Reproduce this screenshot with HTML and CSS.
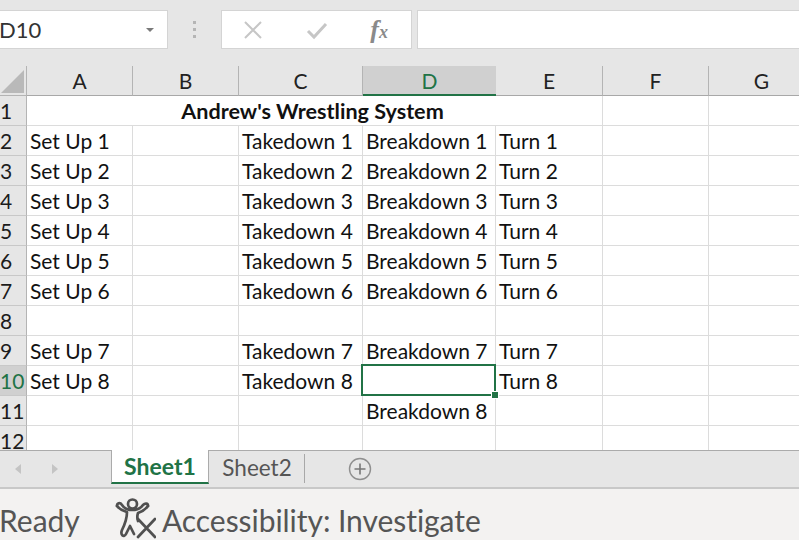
FILE: index.html
```html
<!DOCTYPE html>
<html lang="en">
<head>
  <meta charset="UTF-8" />
  <title>Andrew's Wrestling System</title>
  <link rel="stylesheet" href="styles.css">
</head>
<body>
  <div class="app">
    <div class="formula-bar">
      <div class="name-box">
        <span>D10</span>
        <svg class="name-arrow" width="8" height="4" viewBox="0 0 8 4"><path d="M0 0h8L4 4z" fill="#7a7a7a"/></svg>
      </div>
      <div class="grip"><i></i><i></i><i></i></div>
      <div class="fx-buttons">
        <svg width="20" height="20" viewBox="0 0 20 20"><path d="M2 2l16 16M18 2L2 18" stroke="#c6c6c6" stroke-width="2" fill="none"/></svg>
        <svg width="22" height="20" viewBox="0 0 22 20"><path d="M2 11l6 6L20 4" stroke="#c6c6c6" stroke-width="3" fill="none"/></svg>
        <span class="fx">f<span class="fx-x">x</span></span>
      </div>
      <div class="formula-input"></div>
    </div>

    <div class="sheet">
      <div class="corner"><svg width="23" height="23" viewBox="0 0 23 23"><path d="M23 0v23H0z" fill="#b9b9b9"/></svg></div>
      <div class="col-head">A</div>
      <div class="col-head">B</div>
      <div class="col-head">C</div>
      <div class="col-head selected">D</div>
      <div class="col-head">E</div>
      <div class="col-head">F</div>
      <div class="col-head">G</div>

      <div class="row-head">1</div>
      <div class="cell title">Andrew's Wrestling System</div>
      <div class="cell"></div><div class="cell"></div>

      <div class="row-head">2</div>
      <div class="cell">Set Up 1</div><div class="cell"></div><div class="cell">Takedown 1</div><div class="cell">Breakdown 1</div><div class="cell">Turn 1</div><div class="cell"></div><div class="cell"></div>

      <div class="row-head">3</div>
      <div class="cell">Set Up 2</div><div class="cell"></div><div class="cell">Takedown 2</div><div class="cell">Breakdown 2</div><div class="cell">Turn 2</div><div class="cell"></div><div class="cell"></div>

      <div class="row-head">4</div>
      <div class="cell">Set Up 3</div><div class="cell"></div><div class="cell">Takedown 3</div><div class="cell">Breakdown 3</div><div class="cell">Turn 3</div><div class="cell"></div><div class="cell"></div>

      <div class="row-head">5</div>
      <div class="cell">Set Up 4</div><div class="cell"></div><div class="cell">Takedown 4</div><div class="cell">Breakdown 4</div><div class="cell">Turn 4</div><div class="cell"></div><div class="cell"></div>

      <div class="row-head">6</div>
      <div class="cell">Set Up 5</div><div class="cell"></div><div class="cell">Takedown 5</div><div class="cell">Breakdown 5</div><div class="cell">Turn 5</div><div class="cell"></div><div class="cell"></div>

      <div class="row-head">7</div>
      <div class="cell">Set Up 6</div><div class="cell"></div><div class="cell">Takedown 6</div><div class="cell">Breakdown 6</div><div class="cell">Turn 6</div><div class="cell"></div><div class="cell"></div>

      <div class="row-head">8</div>
      <div class="cell"></div><div class="cell"></div><div class="cell"></div><div class="cell"></div><div class="cell"></div><div class="cell"></div><div class="cell"></div>

      <div class="row-head">9</div>
      <div class="cell">Set Up 7</div><div class="cell"></div><div class="cell">Takedown 7</div><div class="cell">Breakdown 7</div><div class="cell">Turn 7</div><div class="cell"></div><div class="cell"></div>

      <div class="row-head selected">10</div>
      <div class="cell">Set Up 8</div><div class="cell"></div><div class="cell">Takedown 8</div><div class="cell active"></div><div class="cell">Turn 8</div><div class="cell"></div><div class="cell"></div>

      <div class="row-head">11</div>
      <div class="cell"></div><div class="cell"></div><div class="cell"></div><div class="cell">Breakdown 8</div><div class="cell"></div><div class="cell"></div><div class="cell"></div>

      <div class="row-head">12</div>
      <div class="cell"></div><div class="cell"></div><div class="cell"></div><div class="cell"></div><div class="cell"></div><div class="cell"></div><div class="cell"></div>
    </div>

    <div class="tab-bar">
      <div class="tab-nav">
        <svg width="6" height="10" viewBox="0 0 6 10"><path d="M6 0v10L0 5z" fill="#c4c4c4"/></svg>
        <svg width="6" height="10" viewBox="0 0 6 10"><path d="M0 0v10l6-5z" fill="#c4c4c4"/></svg>
      </div>
      <div class="tab current">Sheet1</div>
      <div class="tab">Sheet2</div>
      <div class="tab-sep"></div>
      <svg class="add-sheet" width="24" height="24" viewBox="0 0 24 24"><circle cx="12" cy="12" r="10.5" fill="none" stroke="#8f8f8f" stroke-width="1.4"/><path d="M12 6.5v11M6.5 12h11" stroke="#777" stroke-width="1.6"/></svg>
    </div>

    <div class="status-bar">
      <span class="status-ready">Ready</span>
      <svg class="access-icon" width="42" height="42" viewBox="0 0 42 42" fill="none" stroke="#505050" stroke-width="2.7" stroke-linecap="round" stroke-linejoin="round">
        <circle cx="18.500" cy="7" r="4.500"/>
        <path d="M3 9C3 6 6 5 8 8c2 3 5 5 10 5s9-2 11-5c2-2 5-2 5 1"/>
        <path d="M3 9c3 4 7 5 10 6 0 7-2 12-5 18-2 5 2 8 4 4l4-8 4 8"/>
        <path d="M34 9c-3 4-7 6-10 7-1 3-1 5 0 8"/>
        <path d="M24 22l17 18M41 22L24 40"/>
      </svg>
      <span class="status-access">Accessibility: Investigate</span>
    </div>
  </div>
</body>
</html>
```

FILE: styles.css
```css
html, body {
  margin: 0;
  height: 100%;
  overflow: hidden;
}

body {
  font-family: Lato, "Open Sans", sans-serif;
  color: #1c1c1c;
  background: #e6e6e6;
}

.app {
  display: flex;
  flex-direction: column;
  height: 540px;
  width: 799px;
  overflow: hidden;
}

/* formula bar */
.formula-bar {
  display: flex;
  align-items: stretch;
  height: 39px;
  padding: 10px 0 17px;
  flex: none;
}

.name-box {
  width: 168px;
  box-sizing: border-box;
  display: flex;
  align-items: center;
  justify-content: space-between;
  padding-right: 13px;
  background: #fff;
  border: 1px solid #d4d4d4;
  border-left: none;
  font-size: 22px;
  color: #333;
}

.name-box span {
  margin-left: -1px;
}

.grip {
  width: 53px;
  display: flex;
  flex-direction: column;
  align-items: center;
  justify-content: center;
  gap: 4px;
}

.grip i {
  width: 3px;
  height: 3px;
  background: #b5b5b5;
}

.fx-buttons {
  width: 191px;
  box-sizing: border-box;
  display: flex;
  align-items: center;
  justify-content: space-between;
  padding: 0 23px 0 21px;
  background: #fff;
  border: 1px solid #d4d4d4;
}

.fx {
  font-family: "Liberation Serif", serif;
  font-style: italic;
  font-weight: bold;
  font-size: 26px;
  color: #8a8a8a;
}

.fx-x {
  font-size: 18px;
}

.formula-input {
  flex: 1;
  margin-left: 5px;
  background: #fff;
  border: 1px solid #d4d4d4;
  border-right: none;
}

/* grid */
.sheet {
  flex: none;
  height: 384px;
  overflow: hidden;
  display: grid;
  grid-template-columns: 27px 106px 106px 124px 133px 107px 106px 106px;
  grid-template-rows: repeat(13, 30px);
  background: #fff;
  font-size: 21px;
}

.corner {
  background: #e6e6e6;
  border-right: 1px solid #b4b4b4;
  border-bottom: 1px solid #b4b4b4;
  box-sizing: border-box;
  display: flex;
  align-items: flex-end;
  justify-content: flex-end;
  padding: 0 2px 2px 0;
}

.col-head {
  background: #e6e6e6;
  box-sizing: border-box;
  border-right: 1px solid #b4b4b4;
  border-bottom: 1px solid #a8a8a8;
  display: flex;
  align-items: center;
  justify-content: center;
  color: #222;
}

.col-head.selected {
  background: #d0d0d0;
  color: #217346;
  border-bottom: 2px solid #217346;
  border-right: none;
}

.row-head {
  background: #e6e6e6;
  box-sizing: border-box;
  border-right: 1px solid #b4b4b4;
  border-bottom: 1px solid #c8c8c8;
  display: flex;
  align-items: center;
  line-height: 1;
  overflow: hidden;
}

.row-head.selected {
  background: #d0d0d0;
  color: #217346;
}

.cell {
  box-sizing: border-box;
  border-right: 1px solid #dcdcdc;
  border-bottom: 1px solid #dcdcdc;
  padding-left: 3px;
  display: flex;
  align-items: center;
  white-space: nowrap;
  color: #111;
}

.cell.title {
  grid-column: span 5;
  justify-content: center;
  font-weight: bold;
  font-size: 21.6px;
  padding-right: 7px;
}

.cell.active {
  position: relative;
}

.cell.active::before {
  content: "";
  position: absolute;
  top: -2px;
  left: -2px;
  right: -1px;
  bottom: -1px;
  border: 2px solid #217346;
}

.cell.active::after {
  content: "";
  position: absolute;
  right: -4px;
  bottom: -4px;
  width: 6px;
  height: 6px;
  background: #217346;
  border: 1px solid #fff;
}

/* sheet tabs */
.tab-bar {
  flex: none;
  height: 39px;
  box-sizing: border-box;
  display: flex;
  align-items: flex-start;
  background: #e6e6e6;
  border-top: 1px solid #ababab;
  border-bottom: 2px solid #c8c8c8;
}

.tab-nav {
  width: 111px;
  height: 36px;
  box-sizing: border-box;
  display: flex;
  align-items: center;
  gap: 31px;
  padding-left: 15px;
}

.tab {
  width: 96px;
  height: 33px;
  display: flex;
  align-items: center;
  justify-content: center;
  font-size: 22.500px;
  color: #555;
}

.tab.current {
  box-sizing: border-box;
  width: 98px;
  background: #fff;
  color: #217346;
  font-weight: bold;
  font-size: 23px;
  border-left: 1px solid #ababab;
  border-right: 1px solid #ababab;
  border-bottom: 2px solid #217346;
  margin-top: -1px;
  height: 34px;
}

.tab-sep {
  width: 1px;
  height: 29px;
  margin-top: 3px;
  margin-left: -1px;
  background: #a8a8a8;
}

.add-sheet {
  margin: 6px 0 0 43px;
}

/* status bar */
.status-bar {
  flex: 1;
  display: flex;
  align-items: flex-start;
  background: #f3f2f1;
  color: #555;
  font-size: 30px;
  line-height: 36px;
  padding-top: 8px;
}

.status-ready {
  margin: 5px 0 0 -1px;
  width: 115px;
  flex: none;
}

.access-icon {
  flex: none;
  margin-right: 6px;
}

.status-access {
  margin-top: 5px;
  letter-spacing: -0.05px;
}
```
